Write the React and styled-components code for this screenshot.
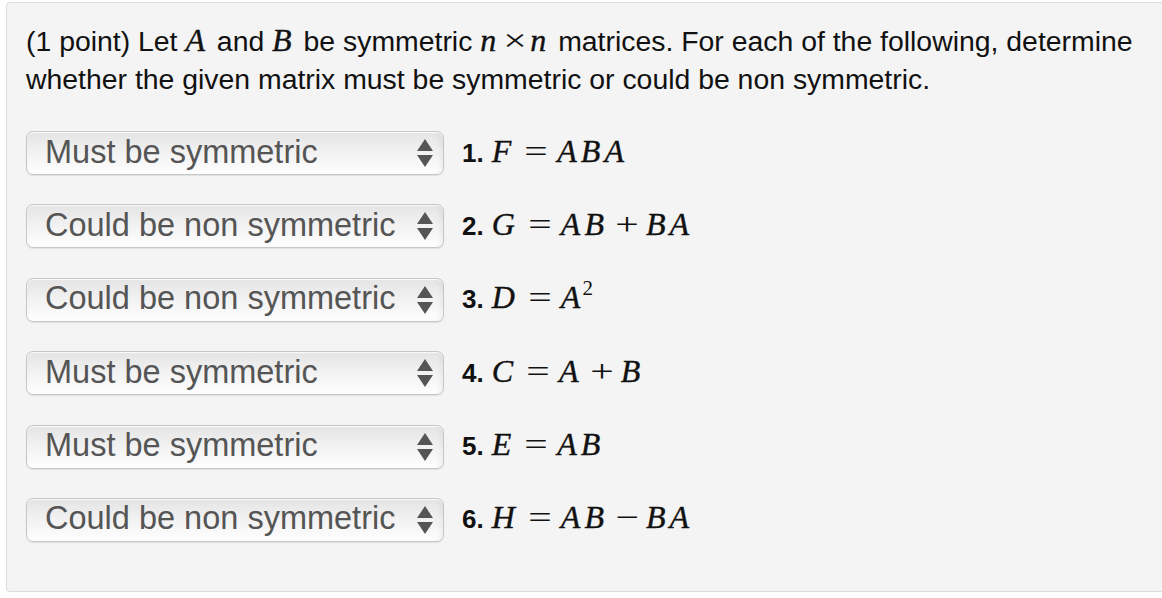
import styled, { createGlobalStyle } from 'styled-components';

const GlobalStyle = createGlobalStyle`
  html, body {
    margin: 0;
    padding: 0;
    background: #ffffff;
  }
  body {
    font-family: "Liberation Sans", Arial, sans-serif;
  }
`;

const Page = styled.div`
  width: 1162px;
  height: 598px;
  overflow: hidden;
  padding: 2px 0 0 6px;
  box-sizing: border-box;
`;

const Panel = styled.div`
  width: 1180px;
  height: 590px;
  box-sizing: border-box;
  background: #f4f4f4;
  border: 1px solid #dcdcdc;
  border-radius: 4px;
  padding: 18px 0 0 19px;
`;

const Prompt = styled.p`
  margin: 0 0 33px;
  font-size: 28.4px;
  line-height: 38px;
  color: #111;
  white-space: nowrap;
`;

const Var = styled.i`
  font-family: "Liberation Serif", "Times New Roman", serif;
  font-style: italic;
  font-size: 32px;
  letter-spacing: 4px;
  -webkit-text-stroke: 0.4px #111;
`;

const Op = styled.span`
  display: inline-block;
  font-family: "Liberation Serif", "Times New Roman", serif;
  font-size: 32px;
  transform: scaleX(1.3);
  margin: 0 ${(p) => p.$space || 10}px;
`;

const List = styled.div`
  display: flex;
  flex-direction: column;
  gap: 29.4px;
`;

const Row = styled.div`
  display: flex;
  align-items: center;
  height: 44px;
`;

const Select = styled.div`
  position: relative;
  width: 418px;
  height: 44px;
  box-sizing: border-box;
  border: 1px solid #c6c6c6;
  border-radius: 7px;
  background: linear-gradient(#e4e4e4, #f1f1f1 45%, #fefefe);
  box-shadow: inset 0 1px 1px rgba(255, 255, 255, 0.9), inset -6px 0 6px -4px rgba(0, 0, 0, 0.06),
    0 1px 1px rgba(0, 0, 0, 0.08);
  display: flex;
  align-items: center;
  padding: 0 0 2px 18px;
  font-size: 32.5px;
  color: #555;
`;

const Arrows = styled.svg`
  position: absolute;
  right: 10px;
  top: 5px;
`;

const Label = styled.span`
  margin-left: 18px;
  display: flex;
  align-items: baseline;
  color: #111;
  white-space: pre;
  position: relative;
  top: -2px;
`;

const Num = styled.b`
  font-size: 26px;
  margin-right: 8px;
`;

const Sup = styled.span`
  font-family: "Liberation Serif", "Times New Roman", serif;
  font-size: 21px;
  position: relative;
  top: -13px;
  margin-left: -2px;
`;

const items = [
  {
    value: 'Must be symmetric',
    f: (
      <>
        <Var>F</Var>
        <Op $space={12}>=</Op>
        <Var>ABA</Var>
      </>
    ),
  },
  {
    value: 'Could be non symmetric',
    f: (
      <>
        <Var>G</Var>
        <Op $space={12}>=</Op>
        <Var>AB</Var>
        <Op>+</Op>
        <Var>BA</Var>
      </>
    ),
  },
  {
    value: 'Could be non symmetric',
    f: (
      <>
        <Var>D</Var>
        <Op $space={12}>=</Op>
        <Var>A</Var>
        <Sup>2</Sup>
      </>
    ),
  },
  {
    value: 'Must be symmetric',
    f: (
      <>
        <Var>C</Var>
        <Op $space={12}>=</Op>
        <Var>A</Var>
        <Op>+</Op>
        <Var>B</Var>
      </>
    ),
  },
  {
    value: 'Must be symmetric',
    f: (
      <>
        <Var>E</Var>
        <Op $space={12}>=</Op>
        <Var>AB</Var>
      </>
    ),
  },
  {
    value: 'Could be non symmetric',
    f: (
      <>
        <Var>H</Var>
        <Op $space={12}>=</Op>
        <Var>AB</Var>
        <Op>−</Op>
        <Var>BA</Var>
      </>
    ),
  },
];

const App = () => {
  return (
    <Page>
      <GlobalStyle />
      <Panel>
        <Prompt>
          (1 point) Let <Var>A</Var> and <Var>B</Var> be symmetric <Var>n</Var>
          <Op $space={6}>×</Op>
          <Var>n</Var> matrices. For each of the following, determine
          <br />
          whether the given matrix must be symmetric or could be non symmetric.
        </Prompt>
        <List>
          {items.map((it, i) => (
            <Row key={i}>
              <Select>
                {it.value}
                <Arrows width="16" height="32" viewBox="0 0 16 32">
                  <path d="M8 2 L16 14 L0 14 Z" fill="#555" />
                  <path d="M0 18 L16 18 L8 30 Z" fill="#555" />
                </Arrows>
              </Select>
              <Label>
                <Num>{i + 1}.</Num>
                {it.f}
              </Label>
            </Row>
          ))}
        </List>
      </Panel>
    </Page>
  );
};

export default App;
